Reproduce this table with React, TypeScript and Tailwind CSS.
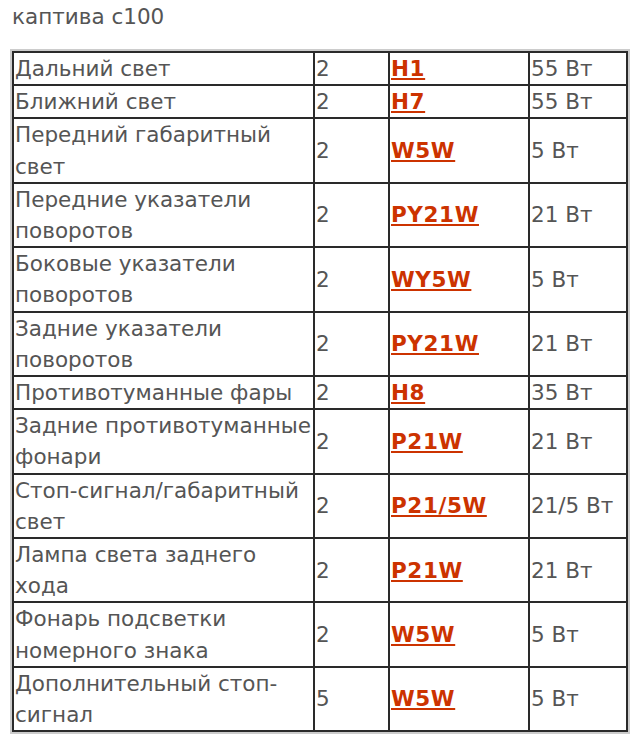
const rows: [string, string, string, string][] = [
  ['Дальний свет', '2', 'H1', '55 Вт'],
  ['Ближний свет', '2', 'H7', '55 Вт'],
  ['Передний габаритный свет', '2', 'W5W', '5 Вт'],
  ['Передние указатели поворотов', '2', 'PY21W', '21 Вт'],
  ['Боковые указатели поворотов', '2', 'WY5W', '5 Вт'],
  ['Задние указатели поворотов', '2', 'PY21W', '21 Вт'],
  ['Противотуманные фары', '2', 'H8', '35 Вт'],
  ['Задние противотуманные фонари', '2', 'P21W', '21 Вт'],
  ['Стоп-сигнал/габаритный свет', '2', 'P21/5W', '21/5 Вт'],
  ['Лампа света заднего хода', '2', 'P21W', '21 Вт'],
  ['Фонарь подсветки номерного знака', '2', 'W5W', '5 Вт'],
  ['Дополнительный стоп-сигнал', '5', 'W5W', '5 Вт'],
]

export default function App() {
  return (
    <div className="bg-white min-h-[738px] px-[10px] pt-[2px] font-['DejaVu_Sans',Verdana,sans-serif] text-[#555]">
      <h1 className="pl-[2px] text-[21.5px] leading-[30px] font-normal">каптива с100</h1>

      <div className="mt-[17px] w-[620px] border-2 border-[#ccc]">
        <table className="w-full table-fixed border-collapse text-[21.5px] leading-[31.2px]">
          <colgroup>
            <col className="w-[301px]" />
            <col className="w-[75px]" />
            <col className="w-[140px]" />
            <col />
          </colgroup>
          <tbody>
            {rows.map(([name, qty, lamp, power], i) => (
              <tr key={i}>
                <td className="border-2 border-[#2a2a2a] px-[1px] align-middle">{name}</td>
                <td className="border-2 border-[#2a2a2a] px-[1px] align-middle">{qty}</td>
                <td className="border-2 border-[#2a2a2a] px-[1px] align-middle">
                  <a href="#" className="font-bold tracking-[0.6px] text-[#cc3300] underline decoration-2 underline-offset-2">
                    {lamp}
                  </a>
                </td>
                <td className="border-2 border-[#2a2a2a] px-[1px] align-middle">{power}</td>
              </tr>
            ))}
          </tbody>
        </table>
      </div>
    </div>
  )
}
